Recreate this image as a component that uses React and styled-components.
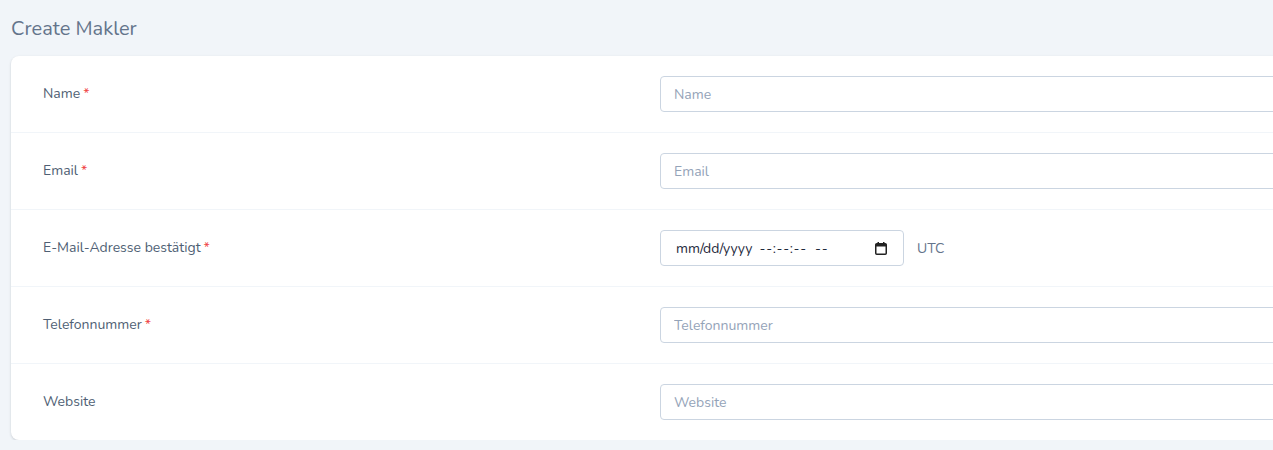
import React from "react";
import styled, { createGlobalStyle } from "styled-components";

const Global = createGlobalStyle`
  html, body { margin: 0; padding: 0; background: #f1f5f9; overflow: hidden; }
  body { font-family: "Nunito", "Lato", "Open Sans", sans-serif; -webkit-font-smoothing: antialiased; }
  * { box-sizing: border-box; }
`;

const Page = styled.div`
  width: 1340px;
  padding: 15px 0 0 11px;
`;

const Heading = styled.h1`
  margin: 0 0 13px;
  font-size: 20px;
  line-height: 28px;
  font-weight: 400;
  color: #64748b;
`;

const Card = styled.div`
  background: #fff;
  border-radius: 8px;
  box-shadow: 0 1px 3px rgba(15, 23, 42, 0.12), 0 1px 2px rgba(15, 23, 42, 0.06);
  overflow: hidden;
`;

const Row = styled.div`
  display: grid;
  grid-template-columns: 649px 1fr;
  border-top: ${(p) => (p.$first ? "none" : "1px solid #f1f5f9")};
`;

const LabelCell = styled.div`
  padding: 26px 32px 0 32px;
`;

const Label = styled.label`
  font-size: 14px;
  line-height: 20px;
  color: #4f5f74;
`;

const Req = styled.span`
  color: #ef4444;
  margin-left: 3px;
`;

const FieldCell = styled.div`
  padding: 20px 0;
  display: flex;
  align-items: center;
  gap: 13px;
`;

const Input = styled.input`
  height: 36px;
  width: 660px;
  border: 1px solid #cbd5e1;
  border-radius: 4px;
  padding: 0 13px;
  font-family: inherit;
  font-size: 14px;
  color: #1e293b;
  background: #fff;
  outline: none;
  &::placeholder { color: #94a3b8; }
`;

const DateBox = styled.div`
  height: 36px;
  width: 244px;
  border: 1px solid #cbd5e1;
  border-radius: 4px;
  padding: 0 16px 0 15px;
  display: flex;
  align-items: center;
  justify-content: space-between;
  background: #fff;
  font-size: 14px;
  color: #1e293b;
  cursor: text;
`;

const DateText = styled.span`
  display: flex;
  white-space: pre;
`;

const Seg = styled.span`
  margin-left: ${(p) => p.$ml || 0}px;
  letter-spacing: ${(p) => p.$ls || 0}px;
`;

const Hint = styled.span`
  font-size: 14px;
  color: #64748b;
`;

const CalendarIcon = () => (
  <svg width="12" height="13" viewBox="0 0 12 13" aria-hidden="true">
    <rect x="2.5" y="0" width="1.5" height="2.5" fill="#222" />
    <rect x="8" y="0" width="1.5" height="2.5" fill="#222" />
    <rect x="0.75" y="1.75" width="10.5" height="10.5" rx="1" fill="none" stroke="#222" strokeWidth="1.5" />
    <rect x="0.75" y="2" width="10.5" height="2.5" fill="#222" />
  </svg>
);

const fields = [
  { label: "Name", req: true, ph: "Name" },
  { label: "Email", req: true, ph: "Email" },
  { label: "E-Mail-Adresse bestätigt", req: true, date: true },
  { label: "Telefonnummer", req: true, ph: "Telefonnummer" },
  { label: "Website", req: false, ph: "Website" },
];

export default function App() {
  return (
    <>
      <Global />
      <Page>
        <Heading>Create Makler</Heading>
        <Card>
          {fields.map((f, i) => (
            <Row key={f.label} $first={i === 0}>
              <LabelCell>
                <Label>
                  {f.label}
                  {f.req && <Req>*</Req>}
                </Label>
              </LabelCell>
              <FieldCell>
                {f.date ? (
                  <>
                    <DateBox role="textbox" aria-label={f.label}>
                      <DateText>
                        <Seg>mm/dd/yyyy</Seg>
                        <Seg $ml={7} $ls={0.8}>--:--:--</Seg>
                        <Seg $ml={8} $ls={0.8}>--</Seg>
                      </DateText>
                      <CalendarIcon />
                    </DateBox>
                    <Hint>UTC</Hint>
                  </>
                ) : (
                  <Input type="text" placeholder={f.ph} />
                )}
              </FieldCell>
            </Row>
          ))}
        </Card>
      </Page>
    </>
  );
}
